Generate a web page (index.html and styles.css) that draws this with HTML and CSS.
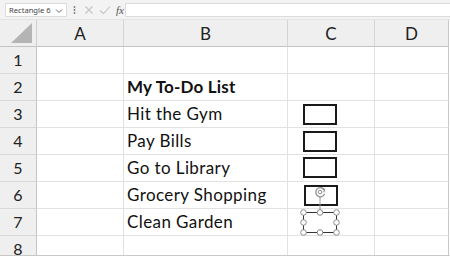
FILE: index.html
```html
<!DOCTYPE html>
<html>
<head>
<meta charset="utf-8">
<link rel="stylesheet" href="styles.css">
</head>
<body>
<div class="screen">
  <div class="fbar">
    <div class="namebox"><span class="nametext">Rectangle 6</span>
      <svg class="chev" width="8" height="6" viewBox="0 0 8 6"><path d="M1 1.5 L4 4.5 L7 1.5" fill="none" stroke="#666" stroke-width="1"/></svg>
    </div>
    <div class="dots">
      <svg width="3" height="10" viewBox="0 0 3 10"><circle cx="1.5" cy="2" r="0.9" fill="#777"/><circle cx="1.5" cy="5" r="0.9" fill="#777"/><circle cx="1.5" cy="8" r="0.9" fill="#777"/></svg>
    </div>
    <div class="icons">
      <svg width="10" height="10" viewBox="0 0 10 10"><path d="M1.5 1.5 L8.5 8.5 M8.5 1.5 L1.5 8.5" stroke="#c4c4c4" stroke-width="1.1" fill="none"/></svg>
      <svg width="12" height="10" viewBox="0 0 12 10"><path d="M1 5.5 L4.5 8.5 L11 1.5" stroke="#c4c4c4" stroke-width="1.1" fill="none"/></svg>
      <span class="fx">fx</span>
    </div>
    <div class="finput"></div>
  </div>
  <div class="grid">
    <div class="corner"><svg width="22" height="20" viewBox="0 0 22 20"><polygon points="21,0 21,20 0,20" fill="#b4b4b4"/></svg></div>
    <div class="ch">A</div><div class="ch">B</div><div class="ch">C</div><div class="ch">D</div>

    <div class="rh">1</div><div class="c"></div><div class="c"></div><div class="c"></div><div class="c"></div>
    <div class="rh">2</div><div class="c"></div><div class="c b"><span class="bold">My To-Do List</span></div><div class="c"></div><div class="c"></div>
    <div class="rh">3</div><div class="c"></div><div class="c b">Hit the Gym</div><div class="c"></div><div class="c"></div>
    <div class="rh">4</div><div class="c"></div><div class="c b">Pay Bills</div><div class="c"></div><div class="c"></div>
    <div class="rh">5</div><div class="c"></div><div class="c b">Go to Library</div><div class="c"></div><div class="c"></div>
    <div class="rh">6</div><div class="c"></div><div class="c b">Grocery Shopping</div><div class="c"></div><div class="c"></div>
    <div class="rh">7</div><div class="c"></div><div class="c b">Clean Garden</div><div class="c"></div><div class="c"></div>
    <div class="rh">8</div><div class="c"></div><div class="c"></div><div class="c"></div><div class="c"></div>
  </div>

  <div class="shape s3"></div>
  <div class="shape s4"></div>
  <div class="shape s5"></div>
  <div class="shape s6"></div>
  <div class="shape s7"></div>
  <svg class="sel" width="44" height="52" viewBox="0 0 44 52">
    <g transform="translate(5,0)">
      <line x1="17" y1="12" x2="17" y2="27" stroke="#9a9a9a" stroke-width="1"/>
      <path d="M21.2 4.6 A4.6 4.6 0 1 0 21.6 9" fill="none" stroke="#8e8e8e" stroke-width="1.3"/>
      <path d="M18.6 3.4 L21.6 4.4 L20.8 7.4" fill="none" stroke="#8e8e8e" stroke-width="1.2"/>
      <circle cx="17" cy="7" r="1.8" fill="none" stroke="#8e8e8e" stroke-width="1"/>
      <g fill="#fff" stroke="#8a8a8a" stroke-width="1">
        <circle cx="0.5" cy="27.5" r="2.8"/><circle cx="17" cy="27.5" r="2.8"/><circle cx="33.5" cy="27.5" r="2.8"/>
        <circle cx="0.5" cy="37.5" r="2.8"/><circle cx="33.5" cy="37.5" r="2.8"/>
        <circle cx="0.5" cy="47.5" r="2.8"/><circle cx="17" cy="47.5" r="2.8"/><circle cx="33.5" cy="47.5" r="2.8"/>
      </g>
    </g>
  </svg>
</div>
</body>
</html>
```

FILE: styles.css
```css
* { box-sizing: border-box; }
html, body { margin: 0; padding: 0; background: #fff; }
.screen {
  position: relative;
  width: 450px;
  height: 257px;
  overflow: hidden;
  background: #fff;
  font-family: "Lato", "Noto Sans", sans-serif;
}
.fbar {
  height: 20px;
  background: #f3f3f3;
  display: flex;
  align-items: flex-start;
  padding-top: 3px;
  padding-left: 5px;
  border-bottom: 1px solid #e3e3e3;
}
.namebox {
  width: 62px;
  height: 14px;
  background: #fff;
  border: 1px solid #dcdcdc;
  display: flex;
  align-items: center;
  justify-content: space-between;
  padding: 0 3px 0 3px;
}
.nametext {
  font-family: "Noto Sans", sans-serif;
  font-size: 7.6px;
  color: #444;
  line-height: 12px;
  white-space: nowrap;
}
.chev { margin-top: 1px; flex: none; }
.dots {
  width: 13px;
  height: 14px;
  display: flex;
  align-items: center;
  justify-content: center;
  margin-left: 1px;
}
.icons {
  display: flex;
  align-items: center;
  gap: 5px;
  height: 14px;
  padding-left: 3px;
  width: 44px;
}
.fx {
  font-family: "Liberation Serif", serif;
  font-style: italic;
  font-size: 11px;
  color: #555;
  line-height: 12px;
}
.finput {
  flex: 1;
  height: 14px;
  background: #fff;
  border: 1px solid #dcdcdc;
  border-right: none;
}
.grid {
  display: grid;
  grid-template-columns: 37px 87px 164px 87px 74px;
  grid-template-rows: repeat(9, 27px);
  height: 236px;
  overflow: hidden;
  border-bottom: 1px solid #c8c8c8;
}
.corner {
  background: #efefef;
  border-right: 1px solid #cfcfcf;
  border-bottom: 1px solid #c4c4c4;
  display: flex;
  align-items: flex-end;
  justify-content: flex-end;
  padding: 0 3px 3px 0;
}
.ch {
  background: #efefef;
  border-right: 1px solid #d4d4d4;
  border-bottom: 1px solid #c4c4c4;
  display: flex;
  align-items: center;
  justify-content: center;
  font-size: 17px;
  color: #222;
  padding-top: 1px;
}
.rh {
  background: #efefef;
  border-right: 1px solid #c4c4c4;
  border-bottom: 1px solid #d8d8d8;
  display: flex;
  align-items: flex-end;
  justify-content: center;
  font-size: 16px;
  color: #222;
  padding-bottom: 3px;
  line-height: 20px;
}
.c {
  border-right: 1px solid #e2e2e2;
  border-bottom: 1px solid #e2e2e2;
}
.b {
  display: flex;
  align-items: flex-end;
  padding-left: 3px;
  padding-bottom: 3px;
  font-size: 17px;
  letter-spacing: 0.4px;
  line-height: 20px;
  color: #111;
  white-space: nowrap;
}
.bold { font-weight: 700; letter-spacing: 0.2px; }
.grid > div:nth-child(5n) { border-right: 1px solid #c8c8c8; }

.shape {
  position: absolute;
  width: 34px;
  height: 21px;
  border: 2px solid #1a1a1a;
  background: transparent;
}
.s3 { left: 303px; top: 104px; }
.s4 { left: 303px; top: 131px; }
.s5 { left: 303px; top: 157px; }
.s6 { left: 304px; top: 185px; }
.s7 { left: 303px; top: 212px; width: 34px; height: 21px; border: 1.5px solid #333; }
.sel { position: absolute; left: 298px; top: 185px; }
```
